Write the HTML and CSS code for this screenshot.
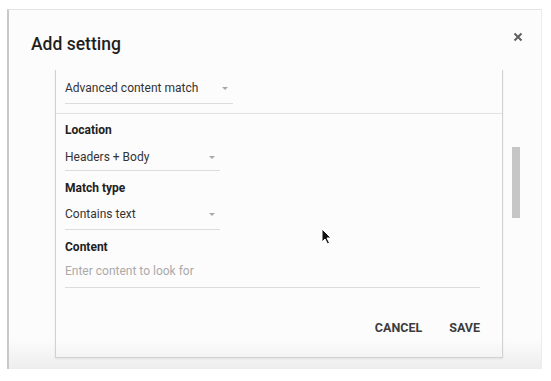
FILE: index.html
```html
<!DOCTYPE html>
<html lang="en">
<head>
  <meta charset="UTF-8" />
  <title>Add setting</title>
  <link rel="stylesheet" href="styles.css">
</head>
<body>

  <div class="dialog">
    <div class="dialog-head">
      <h2>Add setting</h2>
      <button class="close" aria-label="Close">
        <svg width="10" height="10" viewBox="0 0 10 10">
          <path d="M1.5 1.5 L8.5 8.5 M8.5 1.5 L1.5 8.5" stroke="#5f5f5f" stroke-width="2" fill="none"/>
        </svg>
      </button>
    </div>

    <div class="dialog-body">
      <div class="panel">
        <div class="section first">
          <div class="select wide">
            <span>Advanced content match</span>
            <i class="arrow"></i>
          </div>
        </div>

        <div class="section">
          <div class="label">Location</div>
          <div class="select narrow tight">
            <span>Headers + Body</span>
            <i class="arrow"></i>
          </div>

          <div class="label">Match type</div>
          <div class="select narrow">
            <span>Contains text</span>
            <i class="arrow"></i>
          </div>

          <div class="label">Content</div>
          <div class="input">Enter content to look for</div>

          <div class="actions">
            <button>CANCEL</button>
            <button>SAVE</button>
          </div>
        </div>
      </div>

      <div class="scrollbar"><div class="thumb"></div></div>
    </div>

    <!-- mouse pointer from the capture -->
    <svg class="pointer" width="11" height="17" viewBox="0 0 11 17">
      <path d="M1 1 L1 14 L4 11 L6.5 16 L8.5 15 L6 10 L10 10 Z" fill="#111" stroke="#fff" stroke-width="1"/>
    </svg>
  </div>

</body>
</html>
```

FILE: styles.css
```css
* { box-sizing: border-box; margin: 0; padding: 0; }
body {
  font-family: Roboto, 'Noto Sans', sans-serif;
  background: #fff;
  color: #212121;
}

.dialog {
  position: relative;
  width: 535px;
  height: 360px;
  margin: 9px 0 0 7px;
  border-left: 2px solid #c9c9c9;
  border-top: 1px solid #e4e4e4;
  border-right: 1px solid #ececec;
  background: linear-gradient(to bottom, #fdfcfd 0, #fdfcfd 330px, #ededed 100%);
}

.dialog-head {
  display: flex;
  justify-content: space-between;
  align-items: flex-start;
  height: 60px;
  padding: 22px 18px 0 22px;
}
.dialog-head h2 {
  font-size: 17.5px;
  line-height: 24px;
  font-weight: 500;
  color: #1f1f1f;
}
.close {
  display: flex;
  border: none;
  background: none;
  margin-top: 0;
}

.dialog-body {
  display: flex;
  align-items: flex-start;
}
.panel {
  width: 448px;
  margin-left: 46px;
  border: 1px solid #d2d2d2;
  border-top: none;
  box-shadow: 0 1px 2px rgba(0,0,0,0.08);
}
.section {
  padding: 8px 22px 21px 9px;
}
.section.first {
  padding: 10px 9px 9px;
  border-bottom: 1px solid #e2e2e2;
}

.label {
  font-size: 12px;
  line-height: 16px;
  font-weight: 700;
  color: #212121;
  margin-top: 9px;
}
.label:first-child { margin-top: 0; }

.select {
  display: flex;
  justify-content: space-between;
  align-items: center;
  font-size: 12px;
  line-height: 16px;
  color: #333;
  margin-top: 10px;
  padding: 0 5px 7px 0;
  border-bottom: 1px solid #dcdcdc;
}
.select.wide { width: 168px; margin-top: 0; }
.select.narrow { width: 155px; }
.select.tight { margin-top: 11px; padding-bottom: 5px; }
.arrow {
  width: 0;
  height: 0;
  border-left: 3.5px solid transparent;
  border-right: 3.5px solid transparent;
  border-top: 3.5px solid #a8a8a8;
}

.input {
  font-size: 12px;
  line-height: 16px;
  color: #aaa;
  margin-top: 8px;
  padding-bottom: 8px;
  border-bottom: 1px solid #dcdcdc;
}

.actions {
  display: flex;
  justify-content: flex-end;
  gap: 27px;
  margin-top: 32px;
}
.actions button {
  border: none;
  background: none;
  font-family: inherit;
  font-size: 12.5px;
  line-height: 16px;
  font-weight: 700;
  color: #3c3c3c;
}

.scrollbar {
  width: 8px;
  margin-left: 9px;
  padding-top: 77px;
}
.thumb {
  height: 71px;
  background: #c6c6c6;
}

.pointer {
  position: absolute;
  left: 312px;
  top: 218px;
}
```
